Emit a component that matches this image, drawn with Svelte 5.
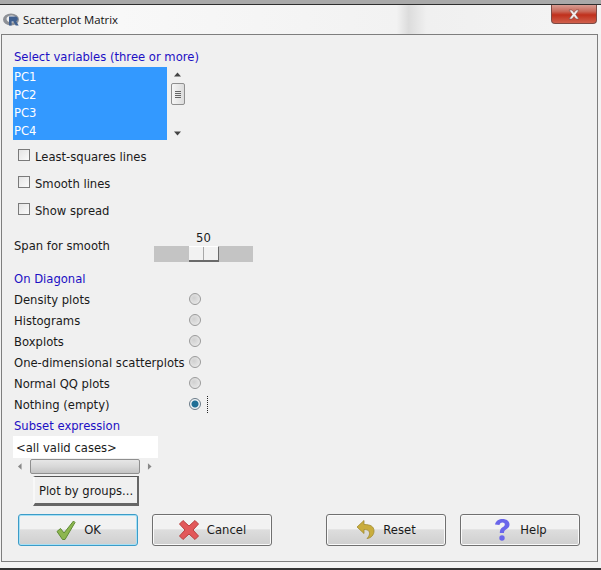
<script>
  let vars = ['PC1', 'PC2', 'PC3', 'PC4'];
  let checks = ['Least-squares lines', 'Smooth lines', 'Show spread'];
  let diag = ['Density plots', 'Histograms', 'Boxplots', 'One-dimensional scatterplots', 'Normal QQ plots', 'Nothing (empty)'];
  let selected = 'Nothing (empty)';
</script>

<div class="screen">
  <div class="titlebar">
    <svg class="r-logo" width="20" height="16" viewBox="0 0 20 16">
      <ellipse cx="9" cy="7.5" rx="8" ry="6" fill="#8d9096" />
      <ellipse cx="9.5" cy="7" rx="5" ry="3.4" fill="#eeeeee" />
      <path d="M7 13.5V4.5h6.5a2.4 2.4 0 0 1 .6 4.7l2.6 4.3h-3l-2.3-4H9.6v4z" fill="#3f5f8f" />
    </svg>
    <span class="title">Scatterplot Matrix</span>
    <div class="close">
      <svg width="14" height="11" viewBox="0 0 14 11">
        <path d="M2 1h3l2 2.500L9 1h3L8.700 5.500 12 10H9L7 7.500 5 10H2l3.300-4.500z" fill="#f4eeee" stroke="#7d4a44" stroke-width=".6" />
      </svg>
    </div>
  </div>

  <div class="panel">
    <div class="heading first">Select variables (three or more)</div>
    <div class="listrow">
      <div class="list">
        {#each vars as v}
          <div class="item">{v}</div>
        {/each}
      </div>
      <div class="vscroll">
        <svg width="7" height="5" viewBox="0 0 7 5"><path d="M3.500 .5 7 4.500H0z" fill="#444" /></svg>
        <div class="vthumb"><i></i><i></i><i></i><i></i></div>
        <svg class="down" width="7" height="5" viewBox="0 0 7 5"><path d="M3.500 4.500 7 .5H0z" fill="#444" /></svg>
      </div>
    </div>

    <div class="checks">
      {#each checks as c}
        <div class="check"><span class="box"></span>{c}</div>
      {/each}
    </div>

    <div class="span-row">
      <span class="span-label">Span for smooth</span>
      <div class="slider">
        <div class="value">50</div>
        <div class="trough"><div class="handle"></div></div>
      </div>
    </div>

    <div class="heading diag">On Diagonal</div>
    <div class="radios">
      {#each diag as d}
        <div class="radio-row">
          <span>{d}</span>
          <span class="radio" class:on={d === selected}></span>
          {#if d === selected}<span class="focus-mark"></span>{/if}
        </div>
      {/each}
    </div>

    <div class="heading subset">Subset expression</div>
    <div class="entry">&lt;all valid cases&gt;</div>
    <div class="hscroll">
      <svg width="6" height="9" viewBox="0 0 6 9"><path d="M1 4.500 5 1v7z" fill="#888" /></svg>
      <div class="hthumb"></div>
      <svg width="6" height="9" viewBox="0 0 6 9"><path d="M5 4.500 1 1v7z" fill="#888" /></svg>
    </div>
    <div class="groups">Plot by groups...</div>

    <div class="buttons">
      <div class="left">
        <div class="btn focus">
          <svg width="22" height="22" viewBox="0 0 22 22">
            <path d="M2 12.500 5.500 9.500 9 14 18.500 2 20 3.500 10 20.500H7.500z" fill="#8db64f" stroke="#5f8b35" stroke-width="1" stroke-linejoin="round" />
          </svg>
          <span>OK</span>
        </div>
        <div class="btn">
          <svg width="22" height="22" viewBox="0 0 22 22">
            <path d="M1.500 5 5 1.500 11 7l6-5.500L20.500 5 15 11l5.500 6-3.500 3.500L11 15l-6 5.500L1.500 17 7 11z" fill="#e2585a" stroke="#b9403f" stroke-width="1" stroke-linejoin="round" />
          </svg>
          <span>Cancel</span>
        </div>
      </div>
      <div class="right">
        <div class="btn">
          <svg width="20" height="22" viewBox="0 0 20 22">
            <path d="M8 1.500 1 8l7 6.500V10.500c4 0 5.500 1.500 5.500 4 0 2-1 3.500-2.500 5 4.500-.5 7-4 7-7.500 0-4.500-3.500-6.500-10-6.500z" fill="#c9ad3d" stroke="#a08a30" stroke-width=".8" stroke-linejoin="round" />
          </svg>
          <span>Reset</span>
        </div>
        <div class="btn help">
          <svg width="18" height="24" viewBox="0 0 18 24">
            <path d="M2 6.500C3 2.500 6 1 9.500 1 13.500 1 16.500 3.200 16.500 6.500c0 2.500-1.500 3.800-3.500 5-1.500.9-2 1.700-2 3.500H6.800c0-3 .8-4.500 2.700-5.700 1.500-1 2.300-1.700 2.300-2.900 0-1.200-1-1.900-2.400-1.900-1.500 0-2.500.8-3 2.500z" fill="#6a66ea" />
            <circle cx="9" cy="20" r="2.700" fill="#6a66ea" />
          </svg>
          <span>Help</span>
        </div>
      </div>
    </div>
  </div>
  <div class="bottom"></div>
</div>

<style>
  :global(body) {
    margin: 0;
    background: #f1f1f1;
  }

  .screen {
    width: 601px;
    height: 570px;
    overflow: hidden;
    display: flex;
    flex-direction: column;
    font-family: "DejaVu Sans", sans-serif;
    font-size: 11.6px;
    color: #1a1a1a;
    background: #f3f3f3;
    border-top: 4px solid #a9a9a9;
    box-sizing: border-box;
  }

  .titlebar {
    height: 30px;
    flex: none;
    display: flex;
    align-items: flex-start;
    border-top: 1px solid #2e2e2e;
    box-sizing: border-box;
    padding-left: 2px;
    background: linear-gradient(90deg, #eeeeee 0%, #f8f8f8 20%, #f2f2f2 66%, #dcdcdc 68%, #f0f0f0 71%, #f4f4f4 100%);
  }

  .r-logo {
    margin-top: 7px;
  }

  .title {
    margin-left: 1px;
    margin-top: 7px;
    font-family: "Open Sans", sans-serif;
    font-size: 11.4px;
    color: #111;
  }

  .close {
    margin-left: auto;
    margin-right: 4px;
    width: 46px;
    height: 19px;
    box-sizing: border-box;
    border: 1px solid #7d4a44;
    border-top: none;
    border-radius: 0 0 4px 4px;
    background: linear-gradient(#d79c92 0%, #c9695a 35%, #c0301c 55%, #d0604c 100%);
    display: flex;
    align-items: center;
    justify-content: center;
  }

  .panel {
    width: 597px;
    margin-left: 1px;
    height: 528px;
    flex: none;
    box-sizing: border-box;
    border: 1px solid #7e7e7e;
    background: #f0f0f0;
    padding: 0 12px;
  }

  .heading {
    color: #1c0fc4;
    height: 16px;
    line-height: 16px;
  }

  .first {
    margin-top: 14px;
  }

  .listrow {
    display: flex;
    margin-top: 2px;
    margin-left: -1px;
  }

  .list {
    width: 154px;
    height: 73px;
    background: #3399ff;
    color: #fff;
    box-sizing: border-box;
    padding: 1px;
  }

  .item {
    height: 18px;
    line-height: 18px;
  }

  .vscroll {
    width: 15px;
    height: 73px;
    margin-left: 3px;
    display: flex;
    flex-direction: column;
    align-items: center;
    padding-top: 5px;
    box-sizing: border-box;
  }

  .vthumb {
    margin-top: 6px;
    width: 14px;
    height: 22px;
    box-sizing: border-box;
    border: 1px solid #8f8f8f;
    border-radius: 2px;
    background: linear-gradient(90deg, #f6f6f6, #dcdcdc);
    display: flex;
    flex-direction: column;
    align-items: center;
    justify-content: center;
    gap: 1px;
  }

  .vthumb i {
    display: block;
    width: 6px;
    height: 1px;
    background: #666;
  }

  .down {
    margin-top: auto;
    margin-bottom: 4px;
  }

  .checks {
    margin-top: 3px;
    padding-left: 4px;
  }

  .check {
    height: 27px;
    display: flex;
    align-items: center;
    gap: 5px;
  }

  .box {
    width: 10px;
    height: 10px;
    border: 1px solid #7a7a7a;
    background: linear-gradient(135deg, #e4e4e4, #fbfbfb);
    margin-top: -3px;
  }

  .span-row {
    margin-top: 6px;
    display: flex;
    height: 36px;
  }

  .span-label {
    width: 140px;
    margin-top: 9px;
  }

  .slider {
    width: 99px;
  }

  .value {
    text-align: center;
    height: 16px;
    line-height: 16px;
  }

  .trough {
    height: 16px;
    background: #c4c4c4;
    display: flex;
    justify-content: center;
  }

  .handle {
    width: 30px;
    height: 16px;
    box-sizing: border-box;
    background: linear-gradient(90deg, #f2f2f2 0 14px, #a8a8a8 14px 15px, #f2f2f2 15px);
    border-right: 1px solid #6a6a6a;
    border-bottom: 2px solid #6a6a6a;
    border-top: 1px solid #fff;
  }

  .diag {
    margin-top: 5px;
  }

  .radios {
    margin-top: 2px;
  }

  .radio-row {
    height: 21px;
    display: flex;
    align-items: center;
    position: relative;
  }

  .radio {
    position: absolute;
    left: 175px;
    top: 4px;
    width: 12px;
    height: 12px;
    box-sizing: border-box;
    border-radius: 50%;
    border: 1px solid #9a9a9a;
    background: radial-gradient(circle at 40% 40%, #d0d0d0, #e2e2e2 60%, #f8f8f8);
  }

  .radio.on {
    border-color: #6b7b88;
    background: radial-gradient(circle, #1f6f96 0 3px, #eef3f6 4px);
  }

  .focus-mark {
    position: absolute;
    left: 193px;
    top: 2px;
    height: 17px;
    border-left: 1px dotted #222;
  }

  .subset {
    margin-top: 3px;
  }

  .entry {
    width: 145px;
    height: 22px;
    line-height: 24px;
    background: #fff;
    margin-top: 2px;
    margin-left: -1px;
    padding-left: 3px;
    box-sizing: border-box;
  }

  .hscroll {
    width: 145px;
    margin-left: -1px;
    height: 16px;
    display: flex;
    align-items: center;
    justify-content: space-between;
    padding: 0 6px 0 4px;
    box-sizing: border-box;
  }

  .hthumb {
    width: 110px;
    height: 15px;
    margin-left: 7px;
    margin-right: 7px;
    flex: none;
    box-sizing: border-box;
    border: 1px solid #8f8f8f;
    border-radius: 2px;
    background: linear-gradient(#e6e6e6, #d8d8d8 50%, #c4c4c4);
  }

  .groups {
    width: 106px;
    height: 30px;
    line-height: 28px;
    margin-left: 19px;
    margin-top: 2px;
    text-align: center;
    box-sizing: border-box;
    background: #f0f0f0;
    border-top: 1px solid #555;
    border-left: 2px solid #f8f8f8;
    border-right: 2px solid #666;
    border-bottom: 3px solid #666;
  }

  .buttons {
    margin-top: 8px;
    margin-left: 4px;
    margin-right: 5px;
    display: flex;
    justify-content: space-between;
  }

  .left,
  .right {
    display: flex;
    gap: 14px;
  }

  .btn {
    width: 120px;
    height: 32px;
    box-sizing: border-box;
    border: 1px solid #707070;
    border-radius: 3px;
    background: linear-gradient(#f2f2f2 0 45%, #dddddd 50%, #cfcfcf 100%);
    display: flex;
    align-items: center;
    justify-content: center;
    gap: 7px;
    box-shadow: inset 0 0 0 1px #fafafa;
  }

  .btn.focus {
    border-color: #3c9cc8;
    box-shadow: inset 0 0 0 1px #a8e0f5;
  }

  .btn.help {
    gap: 9px;
  }

  .bottom {
    flex: 1;
    background: linear-gradient(#f3f3f3 0 6px, #333 6px);
  }
</style>
